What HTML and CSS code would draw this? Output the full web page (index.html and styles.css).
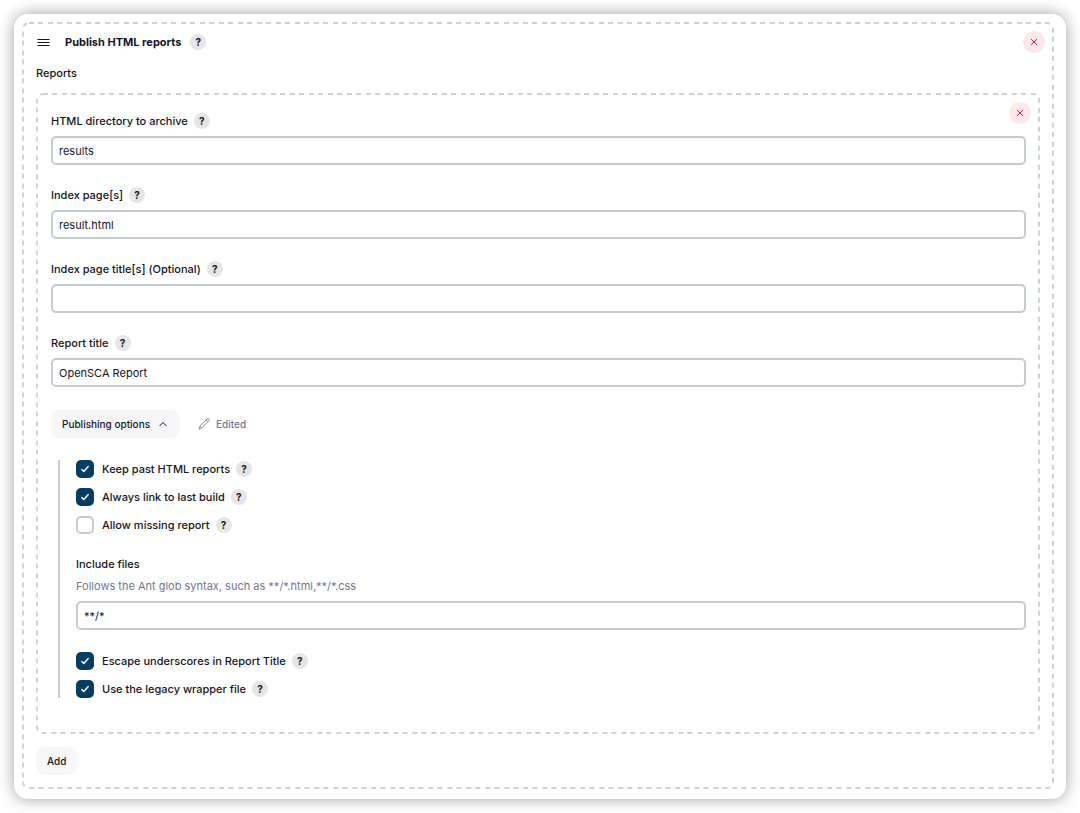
FILE: index.html
```html
<!DOCTYPE html>
<html lang="en">
<head>
<meta charset="utf-8">
<title>Publish HTML reports</title>
<link rel="stylesheet" href="styles.css">
</head>
<body>
<svg class="sprite" aria-hidden="true">
  <symbol id="close" viewBox="0 0 8 8"><path d="M1.200 1.200l5.600 5.600M6.800 1.200L1.200 6.800"/></symbol>
</svg>
<main class="card">
  <section class="chunk chunk-outer">
    <svg class="outline" aria-hidden="true"><rect x="1" y="1" width="100%" height="100%" rx="6"/></svg>
    <header class="chunk-header">
      <svg class="handle" viewBox="0 0 13 9" aria-hidden="true"><path d="M.5 1.5h12M.5 4.5h12M.5 7.5h12"/></svg>
      <h1 class="title">Publish HTML reports</h1>
      <button type="button" class="help" aria-label="Help for Publish HTML reports">?</button>
      <button type="button" class="remove" aria-label="Remove step"><svg class="cross"><use href="#close"/></svg></button>
    </header>
    <h2 class="subtitle">Reports</h2>
    <div class="chunk chunk-inner">
      <svg class="outline" aria-hidden="true"><rect x="1" y="1" width="100%" height="100%" rx="6"/></svg>
      <button type="button" class="remove remove-corner" aria-label="Remove report"><svg class="cross"><use href="#close"/></svg></button>
      <div class="field">
        <div class="field-label"><label for="dir">HTML directory to archive</label><button type="button" class="help" aria-label="Help for HTML directory">?</button></div>
        <input class="text" id="dir" type="text" value="results">
      </div>
      <div class="field">
        <div class="field-label"><label for="pages">Index page[s]</label><button type="button" class="help" aria-label="Help for index pages">?</button></div>
        <input class="text" id="pages" type="text" value="result.html">
      </div>
      <div class="field">
        <div class="field-label"><label for="titles">Index page title[s] (Optional)</label><button type="button" class="help" aria-label="Help for index page titles">?</button></div>
        <input class="text" id="titles" type="text">
      </div>
      <div class="field">
        <div class="field-label"><label for="title">Report title</label><button type="button" class="help" aria-label="Help for report title">?</button></div>
        <input class="text" id="title" type="text" value="OpenSCA Report">
      </div>
      <div class="toggle-row">
        <button type="button" class="button" aria-expanded="true">Publishing options<svg class="chevron" viewBox="0 0 8 6" aria-hidden="true"><path d="M.8 4.800L4 1.400l3.200 3.400"/></svg></button>
        <span class="edited"><svg class="pencil" viewBox="0 0 12 12" aria-hidden="true"><path d="M8.100 1.900l1-1a1.200 1.200 0 0 1 1.800 0 1.200 1.200 0 0 1 0 1.800l-1 1-6.500 6.500L.9 11.100l.9-2.700zM8 2l1.900 1.800M2 8.300l1.500 1.800"/></svg>Edited</span>
      </div>
      <div class="options">
        <div class="checks">
          <div class="check"><input type="checkbox" id="keep" checked><label for="keep">Keep past HTML reports</label><button type="button" class="help" aria-label="Help for keeping reports">?</button></div>
          <div class="check"><input type="checkbox" id="always" checked><label for="always">Always link to last build</label><button type="button" class="help" aria-label="Help for linking">?</button></div>
          <div class="check"><input type="checkbox" id="allow"><label for="allow">Allow missing report</label><button type="button" class="help" aria-label="Help for missing report">?</button></div>
        </div>
        <div class="include">
          <label for="include">Include files</label>
          <p class="hint">Follows the Ant glob syntax, such as **/*.html,**/*.css</p>
          <input class="text" id="include" type="text" value="**/*">
        </div>
        <div class="checks">
          <div class="check"><input type="checkbox" id="escape" checked><label for="escape">Escape underscores in Report Title</label><button type="button" class="help" aria-label="Help for escaping underscores">?</button></div>
          <div class="check"><input type="checkbox" id="legacy" checked><label for="legacy">Use the legacy wrapper file</label><button type="button" class="help" aria-label="Help for the wrapper file">?</button></div>
        </div>
      </div>
    </div>
    <button type="button" class="button">Add</button>
  </section>
</main>
</body>
</html>
```

FILE: styles.css
```css
* { box-sizing: border-box; }
body {
  margin: 0;
  padding: 14px;
  background: #fff;
  color: #14141f;
  font: 500 11px/16px Inter, "Liberation Sans", sans-serif;
}
button, input { font: inherit; color: inherit; }
h1, h2, p { margin: 0; font-size: inherit; }
.sprite { display: none; }
svg { fill: none; stroke: currentColor; stroke-linecap: round; stroke-linejoin: round; }
.card {
  padding: 8px 12px 10px 8px;
  border-radius: 14px;
  background: #fff;
  box-shadow: 0 0 16px rgba(0, 0, 0, 0.38);
}
.chunk { position: relative; }
.outline {
  position: absolute;
  inset: 0;
  width: calc(100% - 2px);
  height: calc(100% - 2px);
  overflow: visible;
  pointer-events: none;
  stroke: #cbd3d7;
  stroke-width: 2;
  stroke-linecap: butt;
  stroke-dasharray: 5 4 5 5;
}
.chunk-outer { padding: 9px 14px 14px; }
.chunk-header { display: flex; align-items: center; height: 22px; padding-left: 1px; }
.handle { width: 13px; height: 9px; margin-right: 15px; stroke-linecap: butt; }
.title { font-weight: 700; }
.help {
  width: 16px;
  height: 16px;
  margin-left: 6px;
  padding: 0;
  border: 0;
  border-radius: 50%;
  background: #e6e6e9;
  font-weight: 700;
  font-size: 10px;
  line-height: 16px;
  text-align: center;
}
.title + .help { margin-left: 9px; }
.remove {
  display: grid;
  place-items: center;
  width: 22px;
  height: 22px;
  margin-left: auto;
  margin-right: -5px;
  padding: 0;
  border: 0;
  border-radius: 50%;
  background: #fde9ec;
  color: #e6193f;
}
.cross { width: 8px; height: 8px; }
.subtitle { margin: 12px 0; font-weight: 500; }
.chunk-inner { padding: 20px 14px 36px 15px; margin-bottom: 13px; }
.remove-corner { position: absolute; top: 9px; right: 9px; margin: 0; }
.field { margin-bottom: 22px; }
.field-label { display: flex; align-items: center; height: 16px; margin-bottom: 7px; }
.text {
  display: block;
  width: 100%;
  height: 29px;
  padding: 0 6px;
  border: 2px solid #c3ccd1;
  border-radius: 5px;
  background: #fff;
  font-weight: 400;
}
.toggle-row { display: flex; align-items: center; gap: 18px; height: 30px; }
.button {
  display: inline-flex;
  align-items: center;
  height: 28px;
  padding: 0 11px;
  border: 0;
  border-radius: 8px;
  background: #f7f7f9;
  font-size: 10px;
}
.chevron { width: 8px; height: 6px; margin: 0 2px 0 9px; }
.edited { display: flex; align-items: center; gap: 6px; color: #757590; font-size: 10px; }
.pencil { width: 12px; height: 12px; stroke-width: 0.8; }
.options { margin: 21px 0 0 7px; padding-left: 16px; border-left: 2px solid #c3ccd1; }
.checks { display: grid; gap: 10px; }
.check { display: flex; align-items: center; height: 18px; }
.check input {
  appearance: none;
  width: 18px;
  height: 18px;
  margin: 0 8px 0 0;
  border: 2px solid #c3ccd1;
  border-radius: 5px;
  background: #fff;
}
.check input:checked {
  border-color: #073d60;
  background: #073d60 url("data:image/svg+xml,%3Csvg xmlns='http://www.w3.org/2000/svg' viewBox='0 0 14 14'%3E%3Cpath d='M3.800 7.500l2 2 4.400-5' fill='none' stroke='white' stroke-width='1.400' stroke-linecap='round' stroke-linejoin='round'/%3E%3C/svg%3E") center / 14px no-repeat;
}
.include { margin: 22px 0; }
.hint { margin: 6px 0 7px; color: #757590; font-weight: 400; }
```
